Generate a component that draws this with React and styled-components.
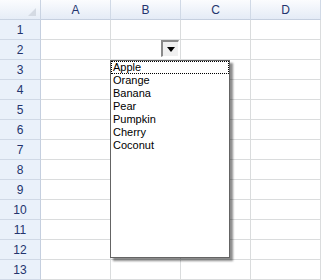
import React from "react";
import styled, { createGlobalStyle } from "styled-components";

const GlobalStyle = createGlobalStyle`
    body {
        margin: 0;
        background: #ffffff;
        font-family: "Liberation Sans", Arial, sans-serif;
    }
`;

const columns = ["A", "B", "C", "D"];
const rows = Array.from({ length: 13 }, (_, i) => i + 1);
const fruits = ["Apple", "Orange", "Banana", "Pear", "Pumpkin", "Cherry", "Coconut"];

const App = () => {
    return (
        <>
            <GlobalStyle />
            <Sheet>
                <Grid>
                    <Corner>
                        <CornerMark />
                    </Corner>
                    {columns.map(col => (
                        <ColHeader key={col}>{col}</ColHeader>
                    ))}
                    {rows.map(row => (
                        <React.Fragment key={row}>
                            <RowHeader>{row}</RowHeader>
                            {columns.map(col => (
                                <Cell key={col} />
                            ))}
                        </React.Fragment>
                    ))}
                </Grid>

                {/* 셀 B2 옆의 드롭다운 버튼 */}
                <DropButton>
                    <Arrow />
                </DropButton>

                <ListBox>
                    {fruits.map((fruit, idx) => (
                        <ListItem key={fruit} selected={idx === 0}>
                            {fruit}
                        </ListItem>
                    ))}
                </ListBox>
            </Sheet>
        </>
    );
};

const Sheet = styled.div`
    position: relative;
    width: 321px;
    height: 280px;
    overflow: hidden;
`;

const Grid = styled.div`
    display: grid;
    grid-template-columns: 41px repeat(4, 70px);
    grid-template-rows: 20px repeat(13, 20px);
`;

const Corner = styled.div`
    position: relative;
    background: linear-gradient(#fbfcfe, #e6edf7);
    border-right: 1px solid #c9d3e2;
    border-bottom: 1px solid #c9d3e2;
`;

const CornerMark = styled.div`
    position: absolute;
    right: 4px;
    bottom: 3px;
    width: 0;
    height: 0;
    border-left: 8px solid transparent;
    border-bottom: 8px solid #d4dae3;
`;

const ColHeader = styled.div`
    display: flex;
    align-items: center;
    justify-content: center;
    background: linear-gradient(#fbfcfe, #e4ebf6);
    border-right: 1px solid #d0d9e6;
    border-bottom: 1px solid #c5cfdf;
    color: #23346e;
    font-size: 12px;
`;

const RowHeader = styled.div`
    display: flex;
    align-items: center;
    justify-content: center;
    background: #eaf1fa;
    border-right: 1px solid #c5cfdf;
    border-bottom: 1px solid #d0d9e6;
    color: #23346e;
    font-size: 12px;
`;

const Cell = styled.div`
    border-right: 1px solid #dadcdd;
    border-bottom: 1px solid #dadcdd;
    background: #ffffff;
`;

const DropButton = styled.div`
    position: absolute;
    left: 161px;
    top: 40px;
    width: 15px;
    height: 14px;
    display: flex;
    align-items: center;
    justify-content: center;
    background: #f0f0f0;
    border-top: 2px solid #8a8a8a;
    border-left: 2px solid #8a8a8a;
    border-right: 1px solid #ffffff;
    border-bottom: 1px solid #ffffff;
`;

const Arrow = styled.div`
    width: 0;
    height: 0;
    margin-top: 1px;
    border-left: 4px solid transparent;
    border-right: 4px solid transparent;
    border-top: 5px solid #000000;
`;

const ListBox = styled.div`
    position: absolute;
    left: 110px;
    top: 60px;
    width: 118px;
    height: 196px;
    background: #ffffff;
    border: 1px solid #646464;
    box-shadow: 3px 3px 2px rgba(0, 0, 0, 0.45);
`;

const ListItem = styled.div`
    height: 13px;
    line-height: 13px;
    padding-left: 2px;
    font-size: 11px;
    color: #000000;
    outline: ${({ selected }) => (selected ? "1px dotted #000000" : "none")};
    outline-offset: -1px;
`;

export default App;
